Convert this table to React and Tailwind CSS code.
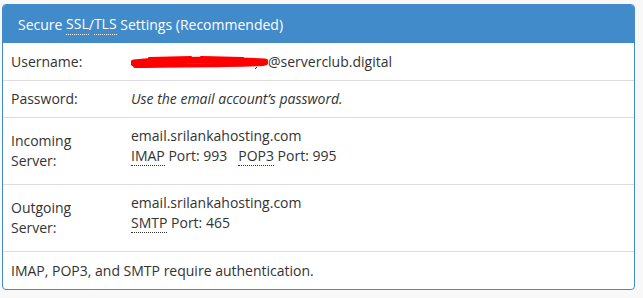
const Abbr = ({ children }) => (
  <abbr className="no-underline border-b border-dotted border-[#333] cursor-help">{children}</abbr>
)

const Scribble = () => (
  <svg width="137" height="16" viewBox="0 0 137 16" className="inline-block">
    <path d="M3 9 C30 6, 70 5, 134 8" stroke="#ff0000" strokeWidth="7" fill="none" strokeLinecap="round" />
    <path d="M4 12 C40 11, 90 12, 132 10" stroke="#ff0000" strokeWidth="4" fill="none" strokeLinecap="round" />
    <path d="M18 4 L60 3 M70 3 L112 4" stroke="#ff0000" strokeWidth="2" fill="none" strokeLinecap="round" />
    <path d="M126 13 L124 15" stroke="#333" strokeWidth="1" fill="none" />
  </svg>
)

const Row = ({ label, children }) => (
  <div className="flex items-center border-t border-[#ddd] px-2 py-2 min-h-[37px]">
    <div className="w-[120px] shrink-0 leading-5">{label}</div>
    <div className="leading-5">{children}</div>
  </div>
)

export default function App() {
  return (
    <div className="w-[643px] h-[298px] bg-[#f8f8f8] pt-1 pl-[2px]" style={{ fontFamily: '"Open Sans", "Liberation Sans", sans-serif' }}>
      <div className="w-[633px] h-[286px] bg-white border border-[#428bca] rounded-[4px] overflow-hidden text-[14px] text-[#333]">
        <div className="bg-[#428bca] text-white text-[14px] h-[38px] flex items-center px-[15px]">
          Secure&nbsp;<abbr className="no-underline border-b border-dotted border-white">SSL</abbr>/<abbr className="no-underline border-b border-dotted border-white">TLS</abbr>&nbsp;Settings (Recommended)
        </div>
        <div className="flex items-center px-2 h-[37px]">
          <div className="w-[120px] shrink-0">Username:</div>
          <div className="flex items-center">
            <Scribble />
            <span>@serverclub.digital</span>
          </div>
        </div>
        <Row label="Password:">
          <em>Use the email account’s password.</em>
        </Row>
        <Row label={<>Incoming<br />Server:</>}>
          <div className="mb-[10px]">
            email.srilankahosting.com<br />
            <Abbr>IMAP</Abbr> Port: 993 &nbsp; <Abbr>POP3</Abbr> Port: 995
          </div>
        </Row>
        <Row label={<>Outgoing<br />Server:</>}>
          <div className="mb-[10px]">
            email.srilankahosting.com<br />
            <Abbr>SMTP</Abbr> Port: 465
          </div>
        </Row>
        <div className="border-t border-[#ddd] px-2 h-[37px] flex items-center">
          IMAP, POP3, and SMTP require authentication.
        </div>
      </div>
    </div>
  )
}
